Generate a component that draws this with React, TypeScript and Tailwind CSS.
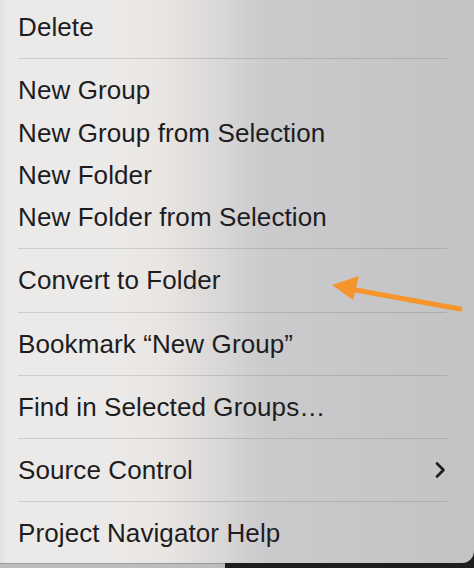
import React from "react";

type Entry = { kind: "item"; label: string; chevron?: boolean } | { kind: "sep" };

const entries: Entry[] = [
  { kind: "item", label: "Delete" },
  { kind: "sep" },
  { kind: "item", label: "New Group" },
  { kind: "item", label: "New Group from Selection" },
  { kind: "item", label: "New Folder" },
  { kind: "item", label: "New Folder from Selection" },
  { kind: "sep" },
  { kind: "item", label: "Convert to Folder" },
  { kind: "sep" },
  { kind: "item", label: "Bookmark \u201CNew Group\u201D" },
  { kind: "sep" },
  { kind: "item", label: "Find in Selected Groups\u2026" },
  { kind: "sep" },
  { kind: "item", label: "Source Control", chevron: true },
  { kind: "sep" },
  { kind: "item", label: "Project Navigator Help" },
];

export default function App() {
  return (
    <div className="w-[474px] h-[568px] overflow-hidden bg-[#1e1e1e] flex flex-col relative">
      <div
        className="relative h-[563px] rounded-br-[12px] pt-[6px] flex flex-col text-[#1d1d1f] bg-[linear-gradient(90deg,#e2e1df_0px,#ebeae8_6px,#eceae8_120px,#e8e5e2_165px,#dcdad9_210px,#cbcacc_265px,#c7c6c9_360px,#c3c2c5_474px)]"
        style={{ fontFamily: '"Liberation Sans", Arial, sans-serif' }}
      >
        {entries.map((e, i) =>
          e.kind === "sep" ? (
            <div key={i} className="h-[21px] flex items-center pl-[18px] pr-[27px]">
              <div className="h-px w-full bg-black/[0.12]" />
            </div>
          ) : (
            <div key={i} className="h-[42.25px] flex items-center pl-[18px] pr-[30px] text-[26px] leading-none tracking-[0.1px]">
              <span className="flex-1">{e.label}</span>
              {e.chevron && (
                <svg width="12" height="18" viewBox="0 0 12 18" className="mr-[-2px]">
                  <path d="M3 2.5 L9.5 9 L3 15.5" fill="none" stroke="#1d1d1f" strokeWidth="2.6" strokeLinecap="round" strokeLinejoin="round" />
                </svg>
              )}
            </div>
          )
        )}
        <svg className="absolute left-0 top-0 pointer-events-none" width="474" height="563" viewBox="0 0 474 563">
          <line x1="460" y1="309" x2="350" y2="289" stroke="#f5952b" strokeWidth="5" strokeLinecap="round" />
          <polygon points="332,285 359,276 353,300" fill="#f5952b" />
        </svg>
      </div>
      <div className="flex h-[5px]">
        <div className="w-[225px] bg-[#bdbdbd] border-t border-[#9a9a9a]" />
        <div className="flex-1 bg-[#1e1e1e]" />
      </div>
    </div>
  );
}
